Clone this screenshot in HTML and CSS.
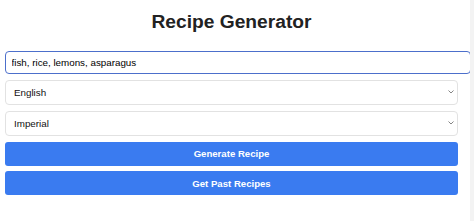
FILE: index.html
```html
<!DOCTYPE html>
<html lang="en">
<head>
    <meta charset="UTF-8">
    <meta name="viewport" content="width=device-width, initial-scale=1.0">
    <title>Recipe Generator</title>
    <link rel="stylesheet" href="styles.css">
</head>
<body>
    <div class="container">
        <h1>Recipe Generator</h1>

        <form id="recipeForm" class="form">
            <input type="text" id="ingredients" class="ingredients" value="fish, rice, lemons, asparagus">
            <select id="language">
                <option>English</option>
                <option>Spanish</option>
                <option>French</option>
            </select>
            <select id="units">
                <option>Imperial</option>
                <option>Metric</option>
            </select>
            <button type="submit">Generate Recipe</button>
            <button type="button" id="pastRecipes">Get Past Recipes</button>
        </form>
    </div>
</body>
</html>
```

FILE: styles.css
```css
* {
    margin: 0;
    padding: 0;
    box-sizing: border-box;
    font-family: "Liberation Sans", Arial, sans-serif;
}

body {
    background-color: white;
    min-height: 100vh;
    padding-left: 5px;
    border-right: 4px solid #f3f3f3;
}

.container {
    width: 453px;
}

h1 {
    text-align: center;
    font-size: 19.2px;
    color: #222;
    padding-top: 11px;
    margin-bottom: 17.5px;
}

.form {
    display: flex;
    flex-direction: column;
    gap: 5.5px;
}

.ingredients {
    box-sizing: content-box;
    width: 100%;
    height: 21.5px;
    padding: 0 5.5px;
    border: 1.5px solid #4c6fcb;
    border-radius: 4px;
    font-size: 9.8px;
    color: #000;
    outline: none;
}

select {
    appearance: none;
    width: 100%;
    height: 25.5px;
    padding: 0 8px;
    border: 1px solid #e2e2e2;
    border-radius: 4px;
    background: white url("data:image/svg+xml,%3Csvg xmlns='http://www.w3.org/2000/svg' width='6' height='4'%3E%3Cpath d='M0.5 0.5 L3 3 L5.5 0.5' fill='none' stroke='%23777' stroke-width='0.9'/%3E%3C/svg%3E") no-repeat right 3px center;
    font-size: 9.8px;
    color: #111;
}

button {
    width: 100%;
    height: 24px;
    background-color: #3a7bf0;
    color: white;
    border: none;
    border-radius: 3px;
    font-size: 9.6px;
    font-weight: bold;
    cursor: pointer;
}

button:hover {
    background-color: #2f6ad8;
}
```
